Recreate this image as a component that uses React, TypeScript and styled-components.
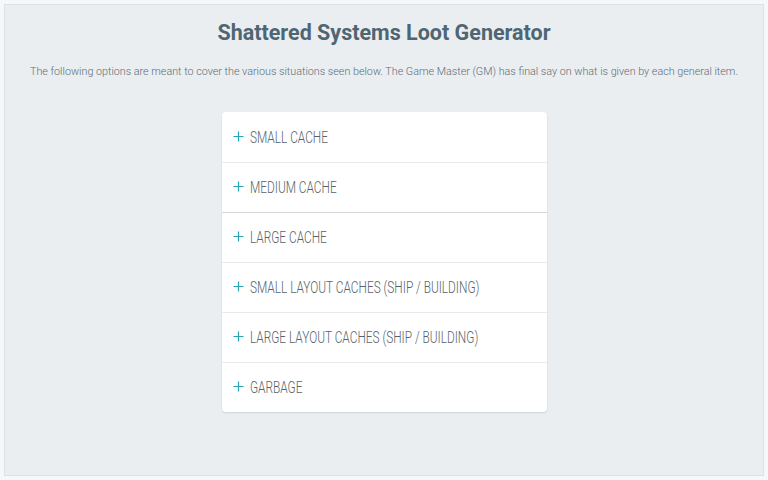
import React from 'react';
import styled, { createGlobalStyle } from 'styled-components';

const GlobalStyle = createGlobalStyle`
  html, body {
    margin: 0;
    padding: 0;
    background: #f6f7f8;
  }

  body {
    padding: 4px;
    font-family: Roboto, "Liberation Sans", sans-serif;
  }
`;

const StyledPage = styled.div`
  box-sizing: border-box;
  width: 760px;
  height: 472px;
  background: #ebeef1;
  border: 1px solid #dde1e4;
  display: flex;
  flex-direction: column;
  align-items: center;

  & .Page__title {
    margin: 13px 0 0;
    font-size: 21.5px;
    font-weight: 700;
    color: #4f6672;
    line-height: 30px;
  }

  & .Page__intro {
    margin: 17px 0 0;
    font-size: 10.75px;
    font-weight: 300;
    color: #5a6d78;
    line-height: 14px;
  }
`;

const StyledLootList = styled.ul`
  list-style: none;
  margin: 33px 0 0;
  padding: 0;
  width: 325px;
  background: #fff;
  border-radius: 4px;
  box-shadow: 0 1px 2px rgba(0, 0, 0, 0.12);
`;

interface LootRowProps {
  $strong?: boolean;
}

const StyledLootRow = styled.li<LootRowProps>`
  box-sizing: border-box;
  height: 50px;
  display: flex;
  align-items: center;
  padding-left: 11px;
  border-top: 1px solid ${({ $strong }) => ($strong ? '#d4d7d9' : '#e8eaec')};
  cursor: pointer;

  &:first-child {
    border-top: none;
  }

  & .LootRow__plus {
    flex: none;
    width: 11px;
    height: 11px;
    margin-right: 6px;
    margin-top: -2px;
  }

  & .LootRow__label {
    display: inline-block;
    white-space: nowrap;
    font-family: Roboto, "Liberation Sans", sans-serif;
    font-weight: 300;
    font-size: 16px;
    color: #56636b;
    transform: scaleX(0.74);
    transform-origin: left center;
  }
`;

const cacheTypes: Array<string> = [
  'SMALL CACHE',
  'MEDIUM CACHE',
  'LARGE CACHE',
  'SMALL LAYOUT CACHES (SHIP / BUILDING)',
  'LARGE LAYOUT CACHES (SHIP / BUILDING)',
  'GARBAGE',
];

const PlusIcon: React.FC = () => (
  <svg className="LootRow__plus" viewBox="0 0 11 11">
    <path d="M5.5 0.5V10.5M0.5 5.5H10.5" stroke="#2aa3b3" strokeWidth="1.2" />
  </svg>
);

const App: React.FC = () => (
  <>
    <GlobalStyle />
    <StyledPage>
      <h1 className="Page__title">Shattered Systems Loot Generator</h1>
      <p className="Page__intro">
        The following options are meant to cover the various situations seen below. The Game Master (GM) has final say on what is given by each general item.
      </p>
      <StyledLootList>
        {cacheTypes.map((name, index) => (
          <StyledLootRow key={name} $strong={index === 2}>
            <PlusIcon />
            <span className="LootRow__label">{name}</span>
          </StyledLootRow>
        ))}
      </StyledLootList>
    </StyledPage>
  </>
);

export default App;
